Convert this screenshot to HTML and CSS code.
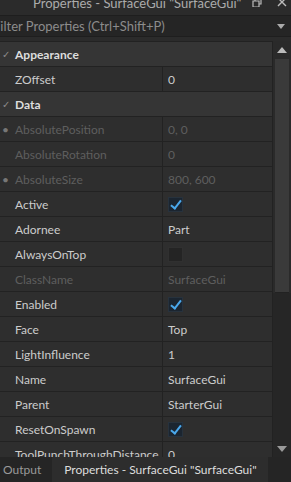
FILE: index.html
```html
<!DOCTYPE html>
<html lang="en">
<head>
    <meta charset="UTF-8">
    <title>Properties - SurfaceGui</title>
    <link rel="stylesheet" href="styles.css">
</head>
<body>
    <div class="window">
        <div class="titlebar">
            <span class="title">Properties - SurfaceGui "SurfaceGui"</span>
            <span class="title-icons">
                <svg width="10" height="10" viewBox="0 0 10 10"><path d="M1 4h6v6H1zM3 4V1h6v6H7" fill="none" stroke="#bbb" stroke-width="1.2"/></svg>
                <svg width="10" height="10" viewBox="0 0 10 10"><path d="M1 1l8 8M9 1l-8 8" stroke="#bbb" stroke-width="1.4"/></svg>
            </span>
        </div>
        <div class="filter">
            <span class="filter-text">Filter Properties (Ctrl+Shift+P)</span>
            <svg class="caret" width="8" height="5" viewBox="0 0 8 5"><path d="M0 0h8L4 5z" fill="#aaa"/></svg>
        </div>

        <div class="panel">
            <div class="grid">
                <div class="row section"><span class="mark">&#10003;</span><span class="name">Appearance</span></div>
                <div class="row"><span class="name">ZOffset</span><span class="value">0</span></div>
                <div class="row section"><span class="mark">&#10003;</span><span class="name">Data</span></div>
                <div class="row off"><span class="mark dot">&bull;</span><span class="name">AbsolutePosition</span><span class="value">0, 0</span></div>
                <div class="row off"><span class="name">AbsoluteRotation</span><span class="value">0</span></div>
                <div class="row off"><span class="mark dot">&bull;</span><span class="name">AbsoluteSize</span><span class="value">800, 600</span></div>
                <div class="row"><span class="name">Active</span><span class="value"><span class="check on"></span></span></div>
                <div class="row"><span class="name">Adornee</span><span class="value">Part</span></div>
                <div class="row"><span class="name">AlwaysOnTop</span><span class="value"><span class="check"></span></span></div>
                <div class="row off"><span class="name">ClassName</span><span class="value">SurfaceGui</span></div>
                <div class="row"><span class="name">Enabled</span><span class="value"><span class="check on"></span></span></div>
                <div class="row"><span class="name">Face</span><span class="value">Top</span></div>
                <div class="row"><span class="name">LightInfluence</span><span class="value">1</span></div>
                <div class="row"><span class="name">Name</span><span class="value">SurfaceGui</span></div>
                <div class="row"><span class="name">Parent</span><span class="value">StarterGui</span></div>
                <div class="row"><span class="name">ResetOnSpawn</span><span class="value"><span class="check on"></span></span></div>
                <div class="row"><span class="name">ToolPunchThroughDistance</span><span class="value">0</span></div>
            </div>
            <div class="scrollbar">
                <div class="arrow up"><svg width="10" height="6" viewBox="0 0 10 6"><path d="M0 6h10L5 0z" fill="#bbb"/></svg></div>
                <div class="thumb"></div>
                <div class="track"></div>
                <div class="arrow down"><svg width="10" height="6" viewBox="0 0 10 6"><path d="M0 0h10L5 6z" fill="#999"/></svg></div>
            </div>
        </div>

        <div class="tabs">
            <span class="tab">Output</span>
            <span class="tab active">Properties - SurfaceGui "SurfaceGui"</span>
        </div>
    </div>
</body>
</html>
```

FILE: styles.css
```css
body {
    margin: 0;
    padding: 0;
    background-color: #2b2b2b;
    font-family: Lato, "Open Sans", Arial, sans-serif;
    font-size: 12px;
    color: #cccccc;
}

.window {
    width: 291px;
    height: 482px;
    display: flex;
    flex-direction: column;
    overflow: hidden;
}

/* title bar, scrolled so its top is cut off */
.titlebar {
    height: 15px;
    flex-shrink: 0;
    display: flex;
    align-items: flex-start;
    justify-content: space-between;
    background-color: #2b2b2b;
    overflow: hidden;
}

.title {
    margin-left: 33px;
    margin-top: -5px;
    font-size: 13px;
    line-height: 16px;
    color: #ababab;
}

.title-icons {
    display: flex;
    gap: 15px;
    padding-right: 4px;
    margin-top: -3px;
}

.filter {
    height: 20px;
    flex-shrink: 0;
    display: flex;
    align-items: center;
    justify-content: space-between;
    background-color: #252525;
    border-top: 1px solid #1e1e1e;
    border-bottom: 1px solid #1e1e1e;
    overflow: hidden;
}

.filter-text {
    margin-left: -7px;
    font-size: 13px;
    color: #8c8c8c;
    white-space: nowrap;
}

.caret {
    margin-right: 6px;
    flex-shrink: 0;
}

.panel {
    flex: 1;
    display: flex;
    padding-top: 4px;
    overflow: hidden;
    background-color: #2b2b2b;
}

.grid {
    width: 272px;
    flex-shrink: 0;
    border-top: 1px solid #222222;
}

.row {
    height: 24px;
    display: grid;
    grid-template-columns: 15px 148px 1fr;
    align-items: center;
    background-color: #2e2e2e;
    border-bottom: 1px solid #222222;
    white-space: nowrap;
}

.row .name {
    grid-column: 2;
    height: 100%;
    display: flex;
    align-items: center;
    border-right: 1px solid #222222;
}

.row .value {
    grid-column: 3;
    padding-left: 5px;
    display: flex;
    align-items: center;
}

.mark {
    grid-column: 1;
    grid-row: 1;
    padding-left: 2px;
    color: #8a8a8a;
    font-size: 10px;
}

.mark.dot {
    color: #777777;
    font-size: 12px;
}

.section {
    background-color: #353535;
}

.section .name {
    grid-column: 2 / 4;
    border-right: none;
    font-weight: bold;
    color: #dddddd;
}

.off .name,
.off .value {
    color: #5e5e5e;
}

.check {
    width: 15px;
    height: 15px;
    box-sizing: border-box;
    background-color: #242424;
    border: 1px solid #303030;
    position: relative;
}

.check.on {
    background-color: #1b2530;
    border-color: #27323d;
}

.check.on::after {
    content: "";
    position: absolute;
    left: 4px;
    top: 0px;
    width: 4px;
    height: 9px;
    border-right: 2px solid #4aa8ec;
    border-bottom: 2px solid #4aa8ec;
    transform: rotate(38deg);
}

.scrollbar {
    flex: 1;
    display: flex;
    flex-direction: column;
    background-color: #2a2a2a;
    border-left: 1px solid #222222;
}

.arrow {
    height: 18px;
    display: flex;
    align-items: center;
    justify-content: center;
    flex-shrink: 0;
}

.thumb {
    height: 233px;
    margin: 0 2px;
    background-color: #3a3a3a;
    border-bottom: 1px solid #222222;
}

.track {
    flex: 1;
    background-color: #262626;
}

.arrow.down {
    height: 15px;
    align-items: flex-start;
    padding-top: 4px;
    box-sizing: border-box;
    background-color: #262626;
}

.tabs {
    height: 25px;
    flex-shrink: 0;
    display: flex;
    background-color: #252525;
    font-size: 12px;
}

.tab {
    display: flex;
    align-items: center;
    padding: 0 11px 0 3px;
    color: #9a9a9a;
}

.tab.active {
    padding: 0 11px 0 12px;
    background-color: #2d2d2d;
    color: #dddddd;
}
```
